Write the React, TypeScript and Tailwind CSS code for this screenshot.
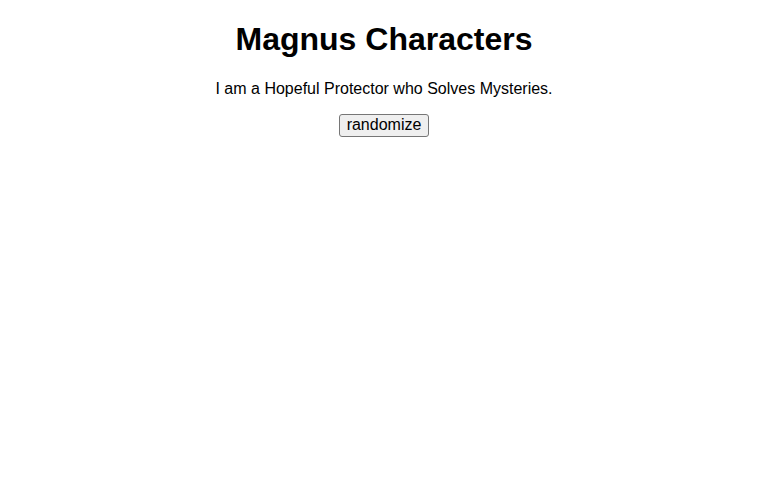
import React, { useState } from 'react';

const adjectives = ['Hopeful', 'Curious', 'Brave', 'Quiet', 'Restless'];
const roles = ['Protector', 'Archivist', 'Wanderer', 'Skeptic', 'Listener'];
const deeds = ['Solves Mysteries', 'Keeps Secrets', 'Reads Statements', 'Asks Questions'];

const pick = (list: string[]) => list[Math.floor(Math.random() * list.length)];

const App: React.FC = () => {
  const [character, setCharacter] = useState({
    adjective: 'Hopeful',
    role: 'Protector',
    deed: 'Solves Mysteries',
  });

  const randomize = () =>
    setCharacter({ adjective: pick(adjectives), role: pick(roles), deed: pick(deeds) });

  return (
    <div className="min-h-screen bg-white text-black text-center font-['Liberation_Sans',Arial,sans-serif] leading-[normal]">
      <h1 className="text-[32px] leading-[normal] font-bold my-[21.44px]">Magnus Characters</h1>
      <p className="text-[16px] leading-[normal] my-4">
        I am a {character.adjective} {character.role} who {character.deed}.
      </p>
      <button
        onClick={randomize}
        className="text-[16px] leading-[normal] bg-[#efefef] border border-[#767676] rounded-[3px] px-[7px] py-[1.5px] hover:bg-[#e5e5e5]"
      >
        randomize
      </button>
    </div>
  );
};

export default App;
